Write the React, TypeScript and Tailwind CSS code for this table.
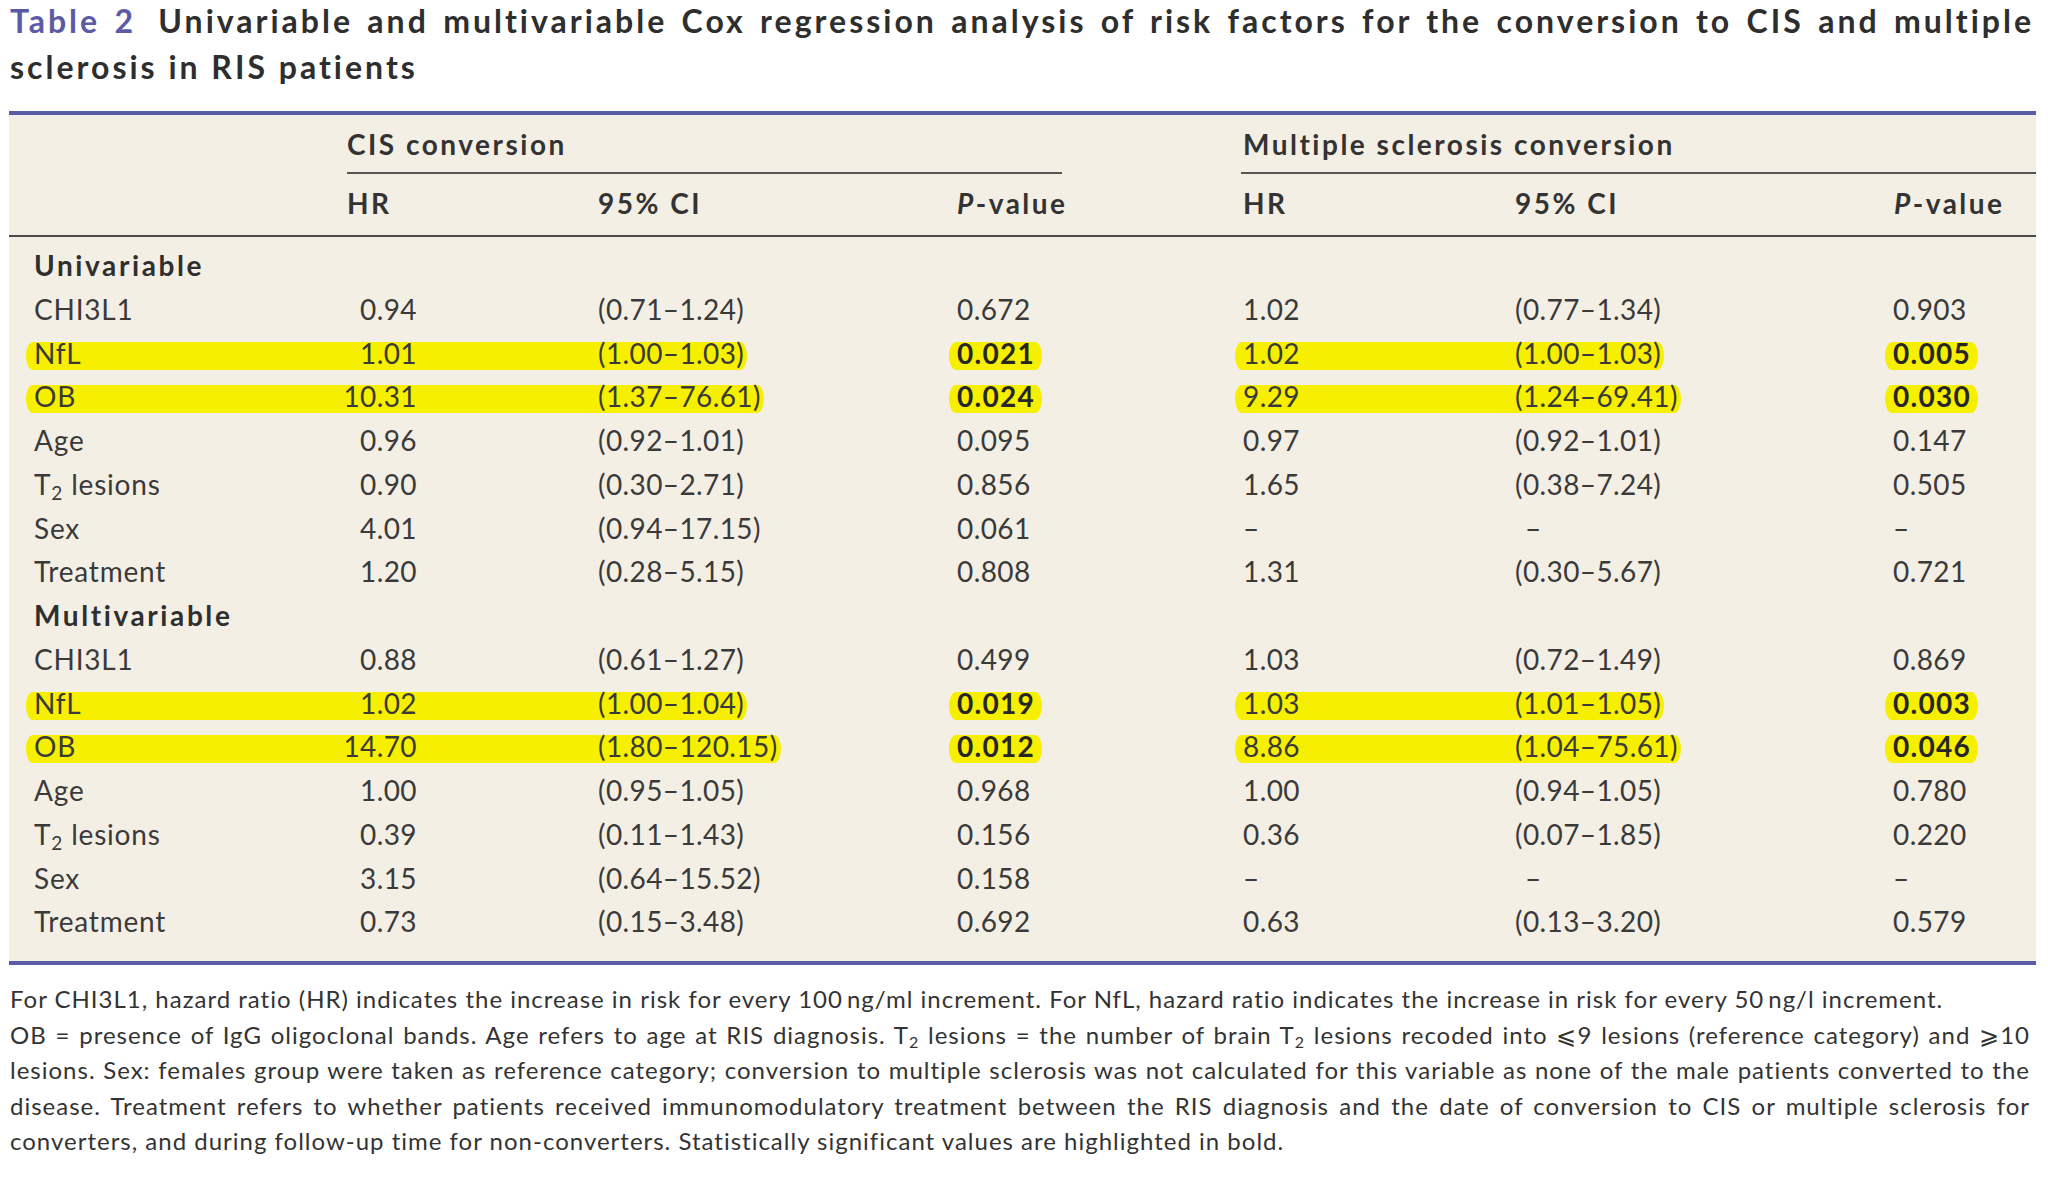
import React from "react";

type Row = {
  label: React.ReactNode;
  hr: string;
  ci: string;
  p: string;
  mhr: string;
  mci: string;
  mp: string;
  hl?: boolean;
};

const T2 = (
  <span>
    T<sub className="text-[19px]">2</sub> lesions
  </span>
);

const uni: Row[] = [
  { label: "CHI3L1", hr: "0.94", ci: "(0.71–1.24)", p: "0.672", mhr: "1.02", mci: "(0.77–1.34)", mp: "0.903" },
  { label: "NfL", hr: "1.01", ci: "(1.00–1.03)", p: "0.021", mhr: "1.02", mci: "(1.00–1.03)", mp: "0.005", hl: true },
  { label: "OB", hr: "10.31", ci: "(1.37–76.61)", p: "0.024", mhr: "9.29", mci: "(1.24–69.41)", mp: "0.030", hl: true },
  { label: "Age", hr: "0.96", ci: "(0.92–1.01)", p: "0.095", mhr: "0.97", mci: "(0.92–1.01)", mp: "0.147" },
  { label: T2, hr: "0.90", ci: "(0.30–2.71)", p: "0.856", mhr: "1.65", mci: "(0.38–7.24)", mp: "0.505" },
  { label: "Sex", hr: "4.01", ci: "(0.94–17.15)", p: "0.061", mhr: "–", mci: "–", mp: "–" },
  { label: "Treatment", hr: "1.20", ci: "(0.28–5.15)", p: "0.808", mhr: "1.31", mci: "(0.30–5.67)", mp: "0.721" },
];

const multi: Row[] = [
  { label: "CHI3L1", hr: "0.88", ci: "(0.61–1.27)", p: "0.499", mhr: "1.03", mci: "(0.72–1.49)", mp: "0.869" },
  { label: "NfL", hr: "1.02", ci: "(1.00–1.04)", p: "0.019", mhr: "1.03", mci: "(1.01–1.05)", mp: "0.003", hl: true },
  { label: "OB", hr: "14.70", ci: "(1.80–120.15)", p: "0.012", mhr: "8.86", mci: "(1.04–75.61)", mp: "0.046", hl: true },
  { label: "Age", hr: "1.00", ci: "(0.95–1.05)", p: "0.968", mhr: "1.00", mci: "(0.94–1.05)", mp: "0.780" },
  { label: T2, hr: "0.39", ci: "(0.11–1.43)", p: "0.156", mhr: "0.36", mci: "(0.07–1.85)", mp: "0.220" },
  { label: "Sex", hr: "3.15", ci: "(0.64–15.52)", p: "0.158", mhr: "–", mci: "–", mp: "–" },
  { label: "Treatment", hr: "0.73", ci: "(0.15–3.48)", p: "0.692", mhr: "0.63", mci: "(0.13–3.20)", mp: "0.579" },
];

function DataRow({ r }: { r: Row }) {
  const band = r.hl ? "bg-[#f7ef00] rounded-[7px/14px]" : "";
  const pill = r.hl
    ? "bg-[#f7ef00] rounded-[7px/14px] font-bold text-[#262626] tracking-[1.3px] pr-[7px]"
    : "tracking-[0.4px] pr-[8px]";
  const dash = r.mci === "–";
  return (
    <div className="flex h-[43.75px] items-start pt-[10px] pl-[17px] tracking-[0.4px]">
      <div className="flex w-[923px]">
        <div className={`flex h-[28px] pl-[8px] pr-[3px] leading-[23px] ${band}`}>
          <div className="w-[250px] tracking-[0.8px]">{r.label}</div>
          <div className="w-[133px] text-right">{r.hr}</div>
          <div className="w-[181px]" />
          <div>{r.ci}</div>
        </div>
      </div>
      <div className="flex w-[286px]">
        <div className={`h-[28px] pl-[8px] leading-[23px] ${pill}`}>{r.p}</div>
      </div>
      <div className="flex w-[650px]">
        <div className={`flex h-[28px] pl-[8px] pr-[3px] leading-[23px] ${band}`}>
          <div className="w-[272px]">{r.mhr}</div>
          <div className={dash ? "pl-[10px]" : ""}>{r.mci}</div>
        </div>
      </div>
      <div className="flex">
        <div className={`h-[28px] pl-[8px] leading-[23px] ${pill}`}>{r.mp}</div>
      </div>
    </div>
  );
}

function GroupRow({ label }: { label: string }) {
  return (
    <div className="flex h-[43.75px] items-start pt-[10px] pl-[25px]">
      <div className="h-[28px] leading-[23px] font-bold tracking-[2.6px] text-[#2f2f2f]">{label}</div>
    </div>
  );
}

const PV = (
  <span>
    <i>P</i>-value
  </span>
);

export default function App() {
  return (
    <div className="min-h-screen w-[2048px] bg-white font-['Lato',_sans-serif] text-[#3a3a3a]">
      {/* Title */}
      <div className="ml-[10px] w-[2024px] text-[32px] font-bold tracking-[3px] text-[#2e2e2e]">
        <div className="text-justify leading-[42px] [text-align-last:justify]">
          <span className="mr-[8px] text-[#5a5aa6]">Table 2</span> Univariable and multivariable Cox regression analysis of
          risk factors for the conversion to CIS and multiple
        </div>
        <div className="mt-[4px] leading-[42px]">sclerosis in RIS patients</div>
      </div>

      {/* Table */}
      <div className="ml-[9px] mt-[23px] w-[2027px] border-y-4 border-[#5a5ca8] bg-[#f4efe4] text-[28px]">
        {/* Header row A */}
        <div className="flex pt-[9px] font-bold tracking-[2.5px] text-[#333]">
          <div className="w-[338px] shrink-0" />
          <div className="w-[715px] shrink-0 border-b-2 border-[#555] pb-[8px] leading-[40px]">CIS conversion</div>
          <div className="w-[179px] shrink-0" />
          <div className="w-[795px] shrink-0 border-b-2 border-[#555] pb-[8px] pl-[2px] leading-[40px]">
            Multiple sclerosis conversion
          </div>
        </div>
        {/* Header row B */}
        <div className="flex border-b-2 border-[#4a4a4a] pt-[9px] pb-[12px] font-bold leading-[40px] tracking-[2.5px] text-[#333]">
          <div className="w-[338px] shrink-0" />
          <div className="w-[251px] shrink-0">HR</div>
          <div className="w-[359px] shrink-0">95% CI</div>
          <div className="w-[286px] shrink-0">{PV}</div>
          <div className="w-[272px] shrink-0">HR</div>
          <div className="w-[379px] shrink-0">95% CI</div>
          <div>{PV}</div>
        </div>
        {/* Body */}
        <div className="pt-[7px] pb-[17px]">
          <GroupRow label="Univariable" />
          {uni.map((r, i) => (
            <DataRow key={"u" + i} r={r} />
          ))}
          <GroupRow label="Multivariable" />
          {multi.map((r, i) => (
            <DataRow key={"m" + i} r={r} />
          ))}
        </div>
      </div>

      {/* Footnote */}
      <div className="ml-[10px] mt-[16px] w-[2020px] text-[24px] leading-[35.5px] tracking-[1px] text-[#333]">
        <div>
          For CHI3L1, hazard ratio (HR) indicates the increase in risk for every 100{"\u2009"}ng/ml increment. For NfL,
          hazard ratio indicates the increase in risk for every 50{"\u2009"}ng/l increment.
        </div>
        <div className="text-justify [text-align-last:justify]">
          OB = presence of IgG oligoclonal bands. Age refers to age at RIS diagnosis. T<sub className="text-[16px]">2</sub>{" "}
          lesions = the number of brain T<sub className="text-[16px]">2</sub> lesions recoded into ⩽9 lesions (reference
          category) and ⩾10
        </div>
        <div className="text-justify [text-align-last:justify]">
          lesions. Sex: females group were taken as reference category; conversion to multiple sclerosis was not
          calculated for this variable as none of the male patients converted to the
        </div>
        <div className="text-justify [text-align-last:justify]">
          disease. Treatment refers to whether patients received immunomodulatory treatment between the RIS diagnosis
          and the date of conversion to CIS or multiple sclerosis for
        </div>
        <div>
          converters, and during follow-up time for non-converters. Statistically significant values are highlighted in
          bold.
        </div>
      </div>
    </div>
  );
}
